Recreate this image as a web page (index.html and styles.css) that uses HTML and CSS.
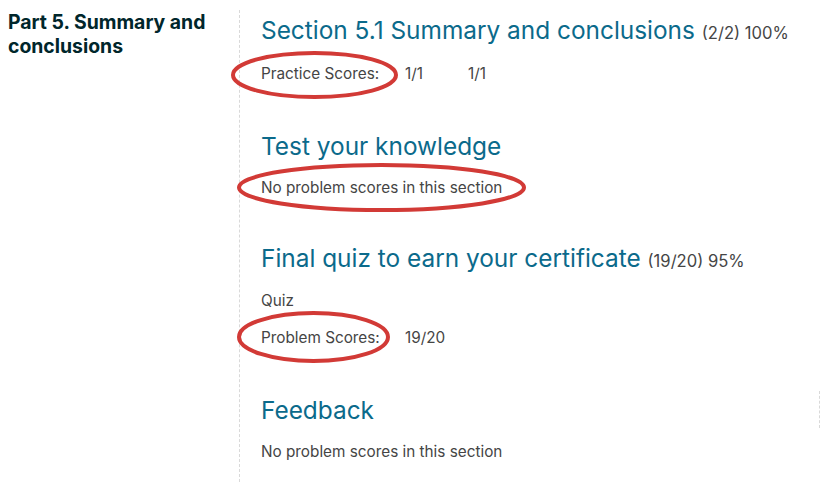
FILE: index.html
```html
<!DOCTYPE html>
<html lang="en">
<head>
    <meta charset="UTF-8">
    <title>Progress</title>
    <link rel="stylesheet" href="styles.css">
</head>
<body>

    <div class="chapter">
        <h2 class="chapter-title">Part 5. Summary and conclusions</h2>

        <div class="sections">

            <div class="section">
                <h3 class="section-title">Section 5.1 Summary and conclusions <span class="score">(2/2) 100%</span></h3>
                <div class="scores first">
                    <span class="label"><span class="circled">Practice Scores:
                        <svg class="ring ring-practice" viewBox="0 0 167 48"><ellipse cx="83.5" cy="24" rx="81.5" ry="22"/></svg>
                    </span></span>
                    <span class="val">1/1</span>
                    <span class="val">1/1</span>
                </div>
            </div>

            <div class="section empty">
                <h3 class="section-title">Test your knowledge</h3>
                <p class="line"><span class="circled">No problem scores in this section
                    <svg class="ring ring-none" viewBox="0 0 289 49"><ellipse cx="144.5" cy="24.5" rx="142.5" ry="22.5"/></svg>
                </span></p>
            </div>

            <div class="section">
                <h3 class="section-title">Final quiz to earn your certificate <span class="score">(19/20) 95%</span></h3>
                <p class="line kind">Quiz</p>
                <div class="scores">
                    <span class="label"><span class="circled">Problem Scores:
                        <svg class="ring ring-problem" viewBox="0 0 153 52"><ellipse cx="76.5" cy="26" rx="74.5" ry="24"/></svg>
                    </span></span>
                    <span class="val">19/20</span>
                </div>
            </div>

            <div class="section empty">
                <h3 class="section-title">Feedback</h3>
                <p class="line">No problem scores in this section</p>
            </div>

        </div>
        <div class="edge"></div>
    </div>

</body>
</html>
```

FILE: styles.css
```css
body {
    font-family: Inter, "Noto Sans", sans-serif;
    background: #fff;
    color: #454545;
    margin: 0;
}

.chapter {
    display: flex;
    padding-left: 8px;
}

.chapter-title {
    width: 210px;
    flex-shrink: 0;
    margin: 10px 21px 0 0;
    font-size: 19.4px;
    line-height: 24px;
    font-weight: 700;
    color: #00262b;
}

.sections {
    flex: 1;
    border-left: 1px dashed #d9d9d9;
    margin-top: 10px;
    padding: 2px 0 0 21px;
    min-height: 470px;
}

.section {
    margin-bottom: 42px;
}

.section.empty {
    margin-bottom: 40px;
}

.section:last-child {
    margin-bottom: 0;
}

.section-title {
    margin: 0 0 10px;
    font-size: 24.4px;
    line-height: 36px;
    font-weight: 400;
    color: #0b6a8b;
}

.score {
    font-size: 16.6px;
    color: #454545;
}

.scores {
    display: flex;
    font-size: 15.3px;
    line-height: 24px;
}

.scores.first {
    padding-top: 1px;
}

.label {
    width: 144px;
}

.val {
    width: 63px;
}

.line {
    margin: 0 0 15px;
    font-size: 15.3px;
    line-height: 24px;
}

.line.kind {
    margin-bottom: 13px;
}

.empty .line {
    padding-top: 2px;
}

.section > :last-child {
    margin-bottom: 0;
}

.circled {
    position: relative;
    display: inline-block;
}

.ring {
    position: absolute;
    fill: none;
    stroke: #d23a36;
    stroke-width: 4;
}

.ring-practice {
    left: -30px;
    top: -11px;
    width: 167px;
    height: 48px;
}

.ring-none {
    left: -24px;
    top: -13px;
    width: 289px;
    height: 49px;
}

.ring-problem {
    left: -24px;
    top: -15px;
    width: 153px;
    height: 52px;
}

.edge {
    flex-shrink: 0;
    width: 0;
    height: 37px;
    margin: 391px 18px 0 0;
    border-right: 1px dashed #d9d9d9;
}
```
